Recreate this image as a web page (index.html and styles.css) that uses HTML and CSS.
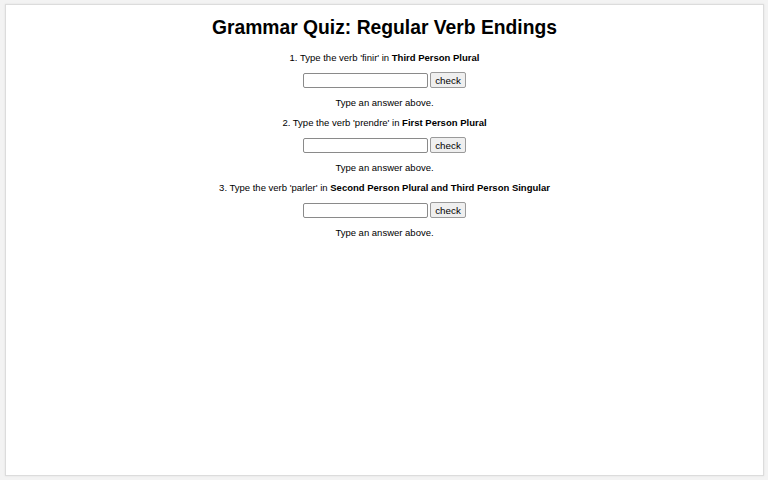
FILE: index.html
```html
<!DOCTYPE html>
<html lang="en">
<head>
    <meta charset="utf-8" />
    <meta name="viewport" content="width=device-width, initial-scale=1" />
    <title>Grammar Quiz</title>
    <link rel="stylesheet" href="styles.css">
</head>
<body>
    <div class="quiz-container">
        <h1 class="quiz-title">Grammar Quiz: Regular Verb Endings</h1>

        <div class="question">
            <p class="question-text">1. Type the verb 'finir' in <b>Third Person Plural</b></p>
            <div class="answer-row">
                <input type="text" class="answer-input" />
                <button class="check-button">check</button>
            </div>
            <p class="feedback">Type an answer above.</p>
        </div>

        <div class="question">
            <p class="question-text">2. Type the verb 'prendre' in <b>First Person Plural</b></p>
            <div class="answer-row">
                <input type="text" class="answer-input" />
                <button class="check-button">check</button>
            </div>
            <p class="feedback">Type an answer above.</p>
        </div>

        <div class="question">
            <p class="question-text">3. Type the verb 'parler' in <b>Second Person Plural and Third Person Singular</b></p>
            <div class="answer-row">
                <input type="text" class="answer-input" />
                <button class="check-button">check</button>
            </div>
            <p class="feedback">Type an answer above.</p>
        </div>
    </div>
</body>
</html>
```

FILE: styles.css
```css
* {
    margin: 0;
    padding: 0;
    box-sizing: border-box;
}

body {
    font-family: "Liberation Sans", Arial, sans-serif;
    background: #f3f3f3;
    padding: 4px 4px 4px 5px;
    height: 100vh;
    color: #000;
}

.quiz-container {
    height: 100%;
    background: #fff;
    border: 1px solid #dcdcdc;
    box-shadow: 0 0 2px rgba(0, 0, 0, 0.08);
    text-align: center;
    padding-top: 11px;
}

.quiz-title {
    font-size: 19.3px;
    line-height: 24px;
    font-weight: bold;
    margin-bottom: 12px;
}

.question {
    margin-bottom: 8px;
}

.question-text {
    font-size: 9.5px;
    line-height: 12px;
    margin-bottom: 8px;
}

.answer-row {
    display: flex;
    justify-content: center;
    align-items: center;
    gap: 2px;
    height: 16px;
    margin-bottom: 9px;
}

.answer-input {
    width: 125px;
    height: 15px;
    border: 1px solid #8a8a8a;
    border-radius: 2px;
    font-size: 10px;
    font-family: inherit;
    padding: 0 3px;
}

.check-button {
    height: 16px;
    padding: 0 4px;
    font-size: 9.8px;
    font-family: inherit;
    background: #efefef;
    border: 1px solid #9a9a9a;
    border-radius: 2px;
}

.feedback {
    font-size: 9.5px;
    line-height: 12px;
}
```
